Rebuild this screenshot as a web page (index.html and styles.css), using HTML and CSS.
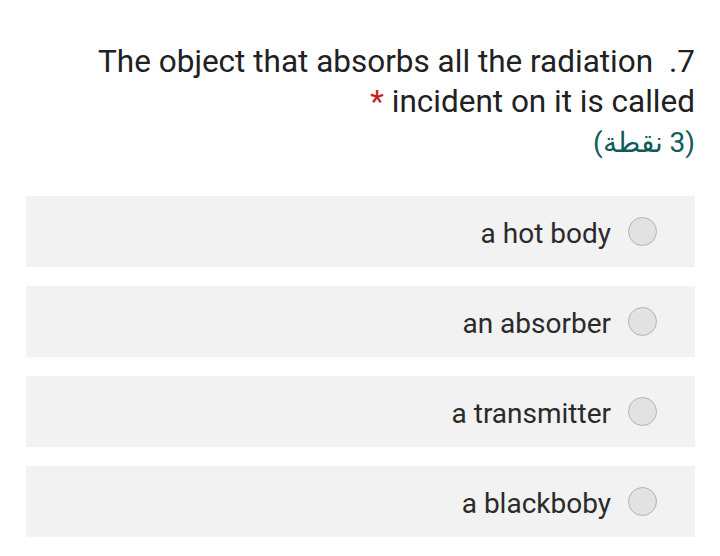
FILE: index.html
```html
<!DOCTYPE html>
<html>
  <head>
    <meta http-equiv="Content-Type" content="text/html; charset=utf-8" />
    <title>Question 7</title>
    <link rel="stylesheet" href="styles.css">
  </head>

  <body>
    <div class="form" dir="rtl">
      <div class="question">
        <div class="title"><span class="num">7.</span> The object that absorbs all the radiation incident on it is called <span class="req">*</span></div>
        <div class="points">(3 نقطة)</div>
      </div>
      <ul class="options">
        <li><span class="radio"></span><span class="label">a hot body</span></li>
        <li><span class="radio"></span><span class="label">an absorber</span></li>
        <li><span class="radio"></span><span class="label">a transmitter</span></li>
        <li><span class="radio"></span><span class="label">a blackboby</span></li>
      </ul>
    </div>
  </body>
</html>
```

FILE: styles.css
```css
* {
  margin: 0;
  padding: 0;
}
body {
  background: #fff;
  font-family: Roboto, "Noto Sans", sans-serif;
  color: #212121;
}
li {
  list-style: none;
}
.form {
  padding: 42px 25px 0 26px;
}
.question {
  padding-bottom: 32px;
}
.title {
  font-size: 31.5px;
  line-height: 40px;
}
.num {
  padding-left: 8px;
}
.req {
  color: #c5221f;
}
.points {
  font-size: 28px;
  line-height: 42px;
  color: #0e5b5b;
}
.options {
  display: flex;
  flex-direction: column;
  gap: 19px;
}
.options li {
  display: flex;
  align-items: center;
  gap: 17px;
  height: 71px;
  padding-right: 38px;
  padding-top: 3px;
  box-sizing: border-box;
  background-color: #f2f2f2;
}
.radio {
  width: 27px;
  height: 27px;
  margin-bottom: 3px;
  border: 1px solid #b3b3b3;
  border-radius: 50%;
  background-color: #e2e2e2;
}
.label {
  font-size: 28px;
  color: #2a2a2a;
}
```
